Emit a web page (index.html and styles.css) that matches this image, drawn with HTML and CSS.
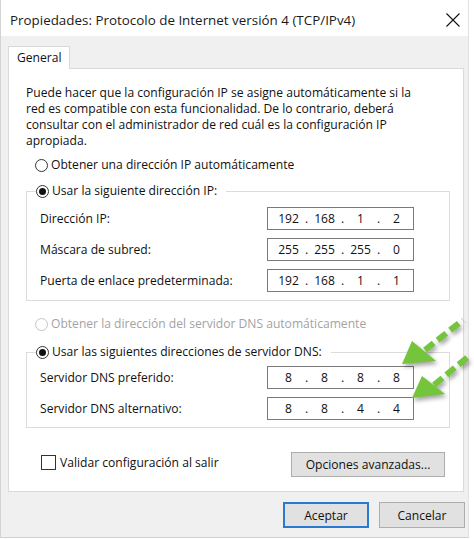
FILE: index.html
```html
<!DOCTYPE html>
<html lang="es">
<head>
<meta charset="utf-8">
<title>Propiedades: Protocolo de Internet versión 4 (TCP/IPv4)</title>
<link rel="stylesheet" href="styles.css">
</head>
<body>
<div class="window">
  <div class="titlebar">
    <span class="title">Propiedades: Protocolo de Internet versión 4 (TCP/IPv4)</span>
    <svg class="close" width="14" height="14" viewBox="0 0 14 14"><path d="M0.5 0.5 L13.5 13.5 M13.5 0.5 L0.5 13.5" stroke="#111" stroke-width="1.1" fill="none"/></svg>
  </div>
  <div class="client">
    <div class="tabs"><div class="tab">General</div></div>
    <div class="panel">
      <p class="desc">Puede hacer que la configuración IP se asigne automáticamente si la<br>red es compatible con esta funcionalidad. De lo contrario, deberá<br>consultar con el administrador de red cuál es la configuración IP<br>apropiada.</p>
      <div class="radio-row r-auto-ip"><span class="radio"></span>Obtener una dirección IP automáticamente</div>
      <fieldset class="group g-ip">
        <legend class="radio-row"><span class="radio checked"></span>Usar la siguiente dirección IP:</legend>
        <div class="field-row"><span class="label">Dirección IP:</span><div class="ip"><span class="oct">192</span><span class="dot">.</span><span class="oct">168</span><span class="dot">.</span><span class="oct">1</span><span class="dot">.</span><span class="oct">2</span></div></div>
        <div class="field-row"><span class="label">Máscara de subred:</span><div class="ip"><span class="oct">255</span><span class="dot">.</span><span class="oct">255</span><span class="dot">.</span><span class="oct">255</span><span class="dot">.</span><span class="oct">0</span></div></div>
        <div class="field-row"><span class="label">Puerta de enlace predeterminada:</span><div class="ip"><span class="oct">192</span><span class="dot">.</span><span class="oct">168</span><span class="dot">.</span><span class="oct">1</span><span class="dot">.</span><span class="oct">1</span></div></div>
      </fieldset>
      <div class="radio-row disabled r-auto-dns"><span class="radio"></span>Obtener la dirección del servidor DNS automáticamente</div>
      <fieldset class="group g-dns">
        <legend class="radio-row"><span class="radio checked"></span>Usar las siguientes direcciones de servidor DNS:</legend>
        <div class="field-row"><span class="label">Servidor DNS preferido:</span><div class="ip"><span class="oct">8</span><span class="dot">.</span><span class="oct">8</span><span class="dot">.</span><span class="oct">8</span><span class="dot">.</span><span class="oct">8</span></div></div>
        <div class="field-row"><span class="label">Servidor DNS alternativo:</span><div class="ip"><span class="oct">8</span><span class="dot">.</span><span class="oct">8</span><span class="dot">.</span><span class="oct">4</span><span class="dot">.</span><span class="oct">4</span></div></div>
      </fieldset>
      <div class="bottom-row">
        <div class="check-row"><span class="checkbox"></span>Validar configuración al salir</div>
        <button class="btn adv">Opciones avanzadas...</button>
      </div>
    </div>
    <div class="actions">
      <button class="btn primary">Aceptar</button>
      <button class="btn">Cancelar</button>
    </div>
  </div>
  <svg class="arrows" width="474" height="539" viewBox="0 0 474 539">
    <g fill="#74c43c" stroke="#74c43c">
      <line x1="425" y1="350" x2="463" y2="320" stroke-width="6" stroke-dasharray="11 5" fill="none"/>
      <polygon points="402,364 412,341 436,361" stroke="none"/>
      <line x1="434" y1="385" x2="469" y2="356" stroke-width="6" stroke-dasharray="11 5" fill="none"/>
      <polygon points="412,398 422,376 445,394" stroke="none"/>
    </g>
  </svg>
</div>
</body>
</html>
```
FILE: styles.css
```css
* { box-sizing: border-box; }
html, body { margin: 0; padding: 0; background: #ffffff; }
body {
  font-family: "Open Sans", "Noto Sans", "Liberation Sans", sans-serif;
  font-size: 12.1px;
  color: #111;
}
.window {
  position: relative;
  width: 469px;
  height: 538px;
  background: #f0f0f0;
  border-left: 1px solid #d4d4d4;
  border-right: 1px solid #e2e2e2;
  border-bottom: 1px solid #cfcfcf;
  display: flex;
  flex-direction: column;
}
.titlebar {
  height: 36px;
  background: #fff;
  display: flex;
  align-items: center;
  justify-content: space-between;
  padding: 4px 8px 0 9px;
}
.title {
  font-size: 13.4px;
  color: #1a1a1a;
}
.close { display: block; margin-right: 0; }
.client {
  padding: 10px 4px 0 7px;
  display: flex;
  flex-direction: column;
}
.tabs { display: flex; height: 22px; }
.tab {
  width: 62px;
  height: 23px;
  background: #fff;
  border: 1px solid #d9d9d9;
  border-bottom: none;
  padding-left: 8px;
  line-height: 21px;
  position: relative;
  z-index: 1;
}
.panel {
  background: #fff;
  border: 1px solid #d9d9d9;
  padding: 16px 13px 14px 17px;
  display: flex;
  flex-direction: column;
}
.desc {
  margin: 0;
  line-height: 16px;
}
.radio-row {
  display: flex;
  align-items: center;
  height: 16px;
  line-height: 16px;
  white-space: nowrap;
}
.radio {
  width: 13px;
  height: 13px;
  border: 1px solid #333;
  border-radius: 50%;
  margin-right: 3px;
  display: flex;
  align-items: center;
  justify-content: center;
  flex: none;
}
.radio.checked::after {
  content: "";
  width: 7px;
  height: 7px;
  border-radius: 50%;
  background: #111;
}
.r-auto-ip { margin: 8px 0 0 9px; }
.r-auto-dns { margin: 15px 0 0 9px; }
.disabled { color: #a3a3a3; }
.disabled .radio { border-color: #c4c4c4; }
.group {
  margin: 10px 0 0 0;
  border: 1px solid #dcdcdc;
  padding: 8px 35px 8px 9px;
  display: flex;
  flex-direction: column;
  gap: 8px;
  min-width: 0;
}
.g-dns { margin-top: 12px; padding-top: 6px; padding-bottom: 7px; }
.group legend {
  padding: 0 9px 0 0;
}
.field-row {
  display: flex;
  align-items: center;
  justify-content: space-between;
  height: 23px;
  padding-left: 4px;
}
.ip {
  width: 147px;
  height: 23px;
  border: 1px solid #7a7a7a;
  display: flex;
  align-items: center;
  padding-left: 6px;
  background: #fff;
}
.oct { width: 29px; text-align: center; }
.dot { width: 7px; text-align: center; }
.bottom-row {
  margin-top: 24px;
  padding-left: 15px;
  display: flex;
  align-items: center;
  justify-content: space-between;
}
.check-row {
  display: flex;
  align-items: center;
  margin-bottom: 4px;
}
.checkbox {
  width: 15px;
  height: 15px;
  border: 1px solid #333;
  margin-right: 4px;
  background: #fff;
}
.btn {
  font-family: inherit;
  font-size: 12.1px;
  color: #111;
  background: #e1e1e1;
  border: 1px solid #adadad;
  padding: 0;
  margin: 0;
}
.adv { width: 154px; height: 25px; margin-right: 5px; }
.actions {
  margin-top: 10px;
  display: flex;
  justify-content: flex-end;
  gap: 10px;
  margin-right: -1px;
}
.actions .btn { width: 86px; height: 26px; }
.btn.primary { border: 2px solid #2a7bd0; }
.arrows {
  position: absolute;
  left: -1px;
  top: 0;
  pointer-events: none;
  filter: drop-shadow(2px 3px 2px rgba(0,0,0,0.35));
}
```
